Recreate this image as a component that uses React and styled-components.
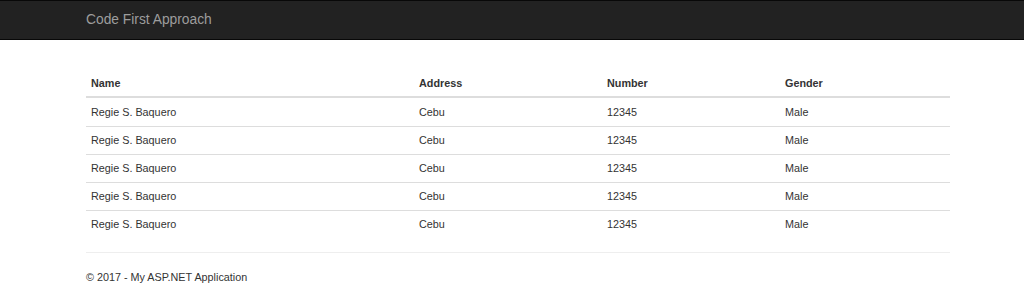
import React from 'react';
import styled, { createGlobalStyle } from 'styled-components';

const GlobalStyle = createGlobalStyle`
    html, body {
        margin: 0;
        padding: 0;
        background: #fff;
    }
    body {
        font-family: "Liberation Sans", Arial, Helvetica, sans-serif;
        font-size: 10.8px;
        line-height: 16px;
        color: #333;
    }
`

const columns = [
    { title: 'Name', key: 'name', width: 328 },
    { title: 'Address', key: 'address', width: 188 },
    { title: 'Number', key: 'number', width: 178 },
    { title: 'Gender', key: 'gender', width: 170 },
]

const people = [
    { name: 'Regie S. Baquero', address: 'Cebu', number: '12345', gender: 'Male' },
    { name: 'Regie S. Baquero', address: 'Cebu', number: '12345', gender: 'Male' },
    { name: 'Regie S. Baquero', address: 'Cebu', number: '12345', gender: 'Male' },
    { name: 'Regie S. Baquero', address: 'Cebu', number: '12345', gender: 'Male' },
    { name: 'Regie S. Baquero', address: 'Cebu', number: '12345', gender: 'Male' },
]

const App = () => {
    return (
        <>
            <GlobalStyle />
            <Navbar>
                <Wrap>
                    <Brand href="#">Code First Approach</Brand>
                </Wrap>
            </Navbar>
            <Body>
                <Table>
                    <thead>
                        <tr>
                            {columns.map(c => (
                                <Th key={c.key} $w={c.width}>{c.title}</Th>
                            ))}
                        </tr>
                    </thead>
                    <tbody>
                        {people.map((p, i) => (
                            <Row key={i}>
                                {columns.map(c => (
                                    <Td key={c.key}>{p[c.key]}</Td>
                                ))}
                            </Row>
                        ))}
                    </tbody>
                </Table>
                <Rule />
                <Footer>
                    <p>&copy; 2017 - My ASP.NET Application</p>
                </Footer>
            </Body>
        </>
    );
}

export default App;

const Navbar = styled.div`
    height: 38px;
    background: #222;
    border-top: 1px solid #080808;
    border-bottom: 1px solid #080808;
`

const Wrap = styled.div`
    width: 864px;
    margin-left: 86px;
    height: 100%;
    display: flex;
    align-items: center;
`

const Brand = styled.a`
    font-size: 13.8px;
    color: #9d9d9d;
    text-decoration: none;
`

const Body = styled.div`
    width: 864px;
    margin-left: 86px;
    padding-top: 28px;
`

const Table = styled.table`
    width: 100%;
    table-layout: fixed;
    border-collapse: collapse;
    border-spacing: 0;
    margin-bottom: 14px;
`

const Th = styled.th`
    box-sizing: border-box;
    width: ${p => p.$w}px;
    text-align: left;
    font-weight: bold;
    padding: 7px 5px 5px;
    line-height: 16px;
    vertical-align: bottom;
    border-bottom: 2px solid #ddd;
`

const Row = styled.tr`
    &:first-child > td {
        padding-top: 7px;
    }
    & + & > td {
        border-top: 1px solid #ddd;
    }
`

const Td = styled.td`
    padding: 6px 5px 6px;
    line-height: 15px;
    vertical-align: top;
`

const Rule = styled.hr`
    margin: 0;
    border: 0;
    border-top: 1px solid #eee;
`

const Footer = styled.footer`
    p {
        margin: 16px 0 0;
    }
`
